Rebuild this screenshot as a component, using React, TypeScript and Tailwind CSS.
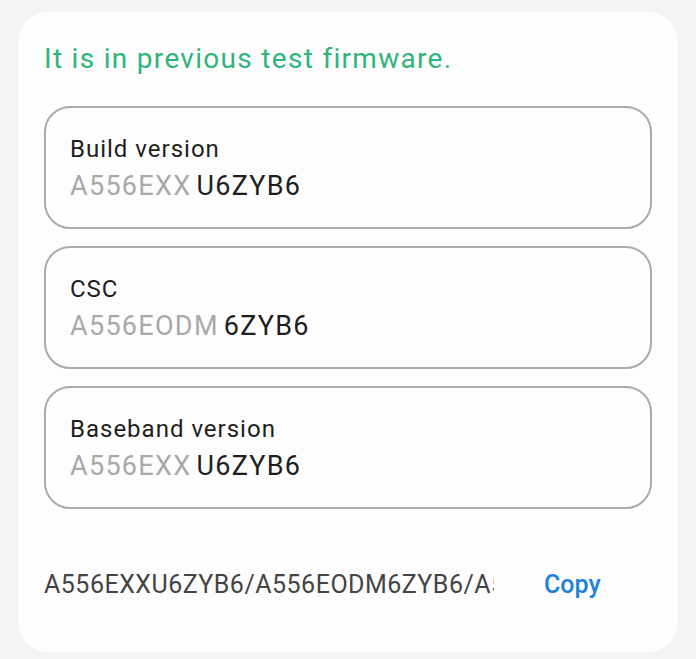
export default function App() {
  const rows = [
    { label: 'Build version', muted: 'A556EXX', value: 'U6ZYB6' },
    { label: 'CSC', muted: 'A556EODM', value: '6ZYB6' },
    { label: 'Baseband version', muted: 'A556EXX', value: 'U6ZYB6' },
  ];

  return (
    <div className="w-[696px] h-[659px] bg-[#f4f4f4] pt-[12px] px-[18px] overflow-hidden" style={{ fontFamily: 'Roboto, "Noto Sans", sans-serif' }}>
      <div className="h-[640px] rounded-[30px] bg-[#fdfdfd] px-[26px] pt-[31px]">
        <p className="text-[28px] leading-[32px] text-[#2fb47c] tracking-[1.3px]">It is in previous test firmware.</p>

        <div className="mt-[31px] flex flex-col gap-[17px]">
          {rows.map((r) => (
            <div key={r.label} className="h-[123px] rounded-[26px] border-2 border-[#ababab] pl-[24px] pt-[26px]">
              <p className="text-[24px] leading-[30px] text-[#1e1e1e] tracking-[1px]">{r.label}</p>
              <p className="mt-[6px] text-[27px] leading-[32px] text-[#1e1e1e] tracking-[1.3px]">
                <span className="text-[#a9a9a9]">{r.muted}</span>
                <span className="ml-[5px]">{r.value}</span>
              </p>
            </div>
          ))}
        </div>

        <div className="mt-[61px] flex items-center">
          <div className="w-[450px] overflow-hidden whitespace-nowrap text-[25px] leading-[30px] text-[#444] tracking-[0.5px]">
            A556EXXU6ZYB6/A556EODM6ZYB6/A556EXXU6ZYB6
          </div>
          <button className="ml-[50px] text-[25px] leading-[30px] font-medium text-[#1d82dc]">Copy</button>
        </div>
      </div>
    </div>
  );
}
